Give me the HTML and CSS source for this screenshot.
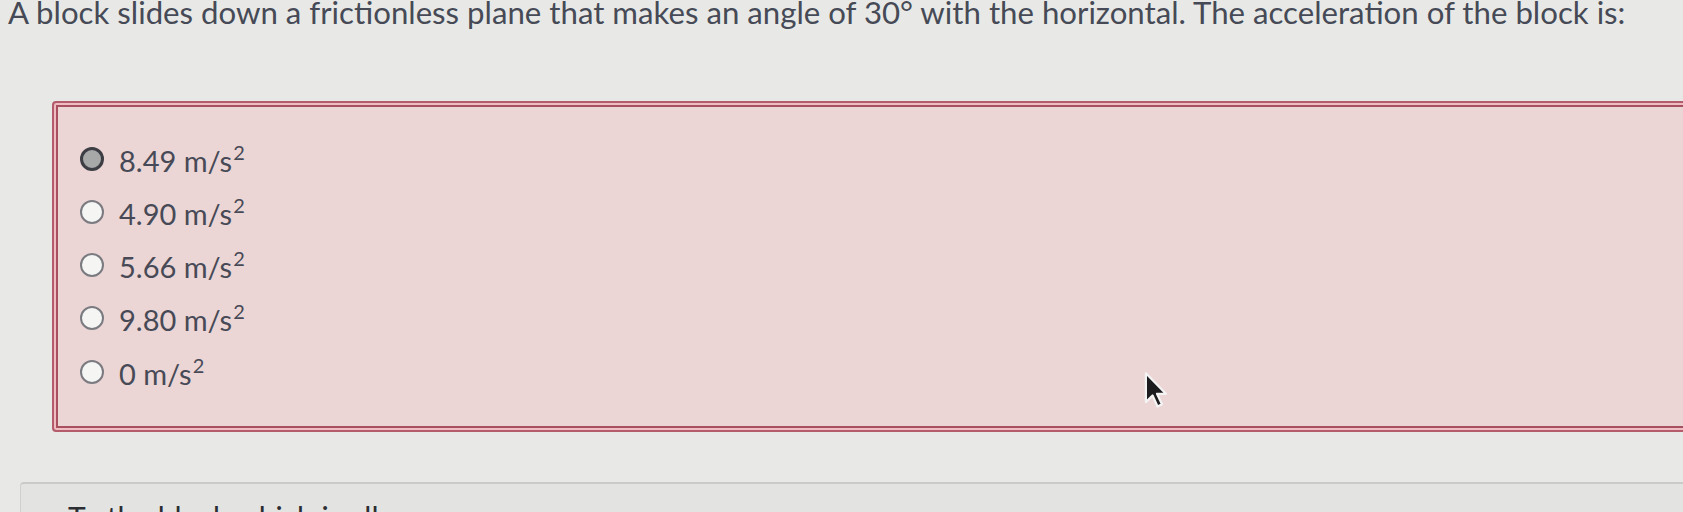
FILE: index.html
```html
<!DOCTYPE html>
<html lang="en">
<head>
<meta charset="utf-8">
<title>Question</title>
<link rel="stylesheet" href="styles.css">
</head>
<body>
<div class="page">
  <div class="question">A block slides down a frictionless plane that makes an angle of 30° with the horizontal. The acceleration of the block is:</div>
  <div class="answers">
    <label class="option"><span class="radio selected"></span><span class="label">8.49 m/s<sup>2</sup></span></label>
    <label class="option"><span class="radio"></span><span class="label">4.90 m/s<sup>2</sup></span></label>
    <label class="option"><span class="radio"></span><span class="label">5.66 m/s<sup>2</sup></span></label>
    <label class="option"><span class="radio"></span><span class="label">9.80 m/s<sup>2</sup></span></label>
    <label class="option"><span class="radio"></span><span class="label">0 m/s<sup>2</sup></span></label>
  </div>
  <div class="next">
    <div class="next-text">To the block which is all</div>
  </div>
</div>
<svg class="cursor" width="28" height="40" viewBox="0 0 24 36" aria-hidden="true">
  <path d="M2 2 L2 28 L8 22 L12.5 32 L16.5 30 L12 20.5 L20 20.5 Z" fill="#1c1c1e" stroke="#f4f4f4" stroke-width="2" stroke-linejoin="round"/>
</svg>
</body>
</html>
```
FILE: styles.css
```css
html, body {
  margin: 0;
  padding: 0;
}
body {
  width: 1683px;
  height: 512px;
  overflow: hidden;
  background: #e8e9e6;
  font-family: Lato, "Open Sans", sans-serif;
  position: relative;
}
.page {
  display: flex;
  flex-direction: column;
}
.question {
  margin-top: -6px;
  padding-left: 8px;
  font-size: 31.2px;
  line-height: 37px;
  color: #464a56;
  white-space: nowrap;
}
.answers {
  margin-top: 70px;
  margin-left: 52px;
  width: 1700px;
  border: 2px solid #b45c6c;
  border-radius: 4px;
  box-shadow: inset 0 0 0 2px #efbcc1, inset 0 0 0 4px #a8505f;
  background: #ebd5d5;
  padding: 29px 0 32px 26px;
  display: flex;
  flex-direction: column;
}
.option {
  height: 53.25px;
  display: flex;
  align-items: center;
  gap: 15px;
}
.radio {
  width: 20px;
  height: 20px;
  border: 2px solid #7a7b80;
  border-radius: 50%;
  background: #f5f5f3;
  flex: none;
}
.radio.selected {
  border: 3px solid #3c3e44;
  width: 18px;
  height: 18px;
  background: #a7a9a8;
}
.label {
  font-size: 29px;
  color: #474a56;
  line-height: 36px;
  margin-top: 4px;
}
.label sup {
  font-size: 20px;
  vertical-align: 12px;
  line-height: 0;
  margin-left: 1px;
}
.next {
  margin-top: 50px;
  margin-left: 20px;
  width: 1700px;
  height: 80px;
  border-top: 2px solid #cacbc9;
  border-left: 1px solid #d0d1cf;
  border-radius: 4px 0 0 0;
  background: #e3e4e2;
  padding: 15px 0 0 47px;
}
.next-text {
  font-size: 30px;
  line-height: 36px;
  color: #2c2e33;
  white-space: nowrap;
}
.cursor {
  position: absolute;
  left: 1143px;
  top: 371px;
}
```
